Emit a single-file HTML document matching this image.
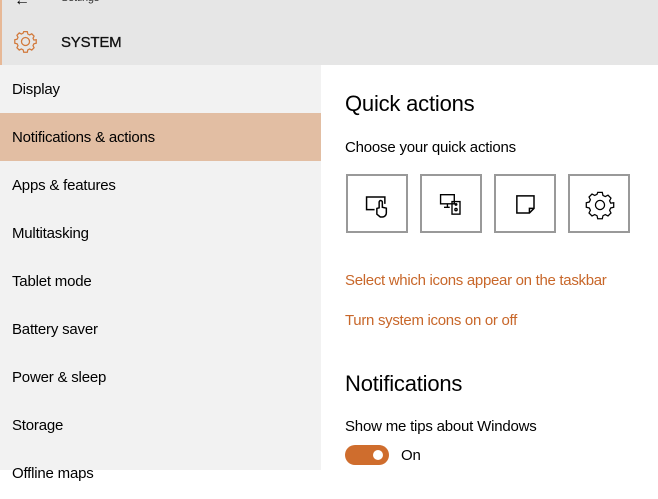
<!DOCTYPE html><html><head><style>
body{margin:0;width:658px;height:470px;overflow:hidden;font-family:"Liberation Sans",sans-serif;background:#fff;position:relative}
.hdr{position:absolute;left:0;top:0;width:658px;height:65px;background:#e6e6e6}
.side{position:absolute;left:0;top:65px;width:321px;height:405px;background:#f2f2f2}
.it{position:absolute;left:0;width:321px;height:48px;line-height:50px;font-size:15px;color:#000;padding-left:12px;box-sizing:border-box;letter-spacing:-.2px}
.sel{background:#e2bea3}
.box{position:absolute;top:174px;width:62px;height:59px;border:2px solid #999;box-sizing:border-box}
.box svg{position:absolute;left:14px;top:13px}
.t{position:absolute;color:#000;letter-spacing:-.2px}
.lnk{position:absolute;color:#c8672a;font-size:15px;letter-spacing:-.3px}
</style></head><body>
<div class="hdr"></div>
<div style="position:absolute;left:0;top:0;width:2px;height:470px;background:#e7b896"></div>
<div class="t" style="left:14px;top:-8px;font-size:16px">&#8592;</div>
<div class="t" style="left:61px;top:-8px;font-size:11px;color:#333">Settings</div>
<svg style="position:absolute;left:13px;top:29px" width="25" height="25" viewBox="0 0 28 28" fill="none" stroke="#d2793b" stroke-width="1.4"><path d="M12 3h4l.6 2.6 2 1 2.4-1.2 2.6 2.6-1.2 2.4 1 2L26 12v4l-2.6.6-1 2 1.2 2.4-2.6 2.6-2.4-1.2-2 1L16 26h-4l-.6-2.6-2-1L7 23.6 4.4 21l1.2-2.4-1-2L2 16v-4l2.6-.6 1-2-1.2-2.4L7 4.4l2.4 1.2 2-1z"/><circle cx="14" cy="14" r="4.5"/></svg>
<div class="t" style="left:61px;top:34px;font-size:15px;color:#111;-webkit-text-stroke:.3px #111">SYSTEM</div>
<div class="side"></div>
<div class="it" style="top:65px">Display</div>
<div class="it sel" style="top:113px">Notifications &amp; actions</div>
<div class="it" style="top:161px">Apps &amp; features</div>
<div class="it" style="top:209px">Multitasking</div>
<div class="it" style="top:257px">Tablet mode</div>
<div class="it" style="top:305px">Battery saver</div>
<div class="it" style="top:353px">Power &amp; sleep</div>
<div class="it" style="top:401px">Storage</div>
<div class="it" style="top:449px">Offline maps</div>
<div class="t" style="left:345px;top:91px;font-size:22px">Quick actions</div>
<div class="t" style="left:345px;top:139px;font-size:15px">Choose your quick actions</div>
<div class="box" style="left:346px"><svg width="32" height="32" viewBox="0 0 28 28" fill="none" stroke="#000" stroke-width="1.3"><path d="M11 18H4V7h16v6"/><path d="M13 22v-5l2-.5v-5a1.4 1.4 0 012.8 0v4.5l3.5.8V21a3.5 3.5 0 01-3.5 3.5H16z"/></svg></div>
<div class="box" style="left:420px"><svg width="32" height="32" viewBox="0 0 28 28" fill="none" stroke="#000" stroke-width="1.2"><path d="M4 5h12v8H4zM10 13v3M7 16h5"/><rect x="14" y="11" width="7" height="11"/><circle cx="17.5" cy="13.5" r=".7"/><circle cx="17.5" cy="18" r="1"/></svg></div>
<div class="box" style="left:494px"><svg width="32" height="32" viewBox="0 0 28 28" fill="none" stroke="#000" stroke-width="1.3"><path d="M6 6h15v11l-4 4H6z"/><path d="M21 17h-4v4"/></svg></div>
<div class="box" style="left:568px"><svg width="32" height="32" viewBox="0 0 28 28" fill="none" stroke="#000" stroke-width="1.1"><path d="M12 3h4l.6 2.6 2 1 2.4-1.2 2.6 2.6-1.2 2.4 1 2L26 12v4l-2.6.6-1 2 1.2 2.4-2.6 2.6-2.4-1.2-2 1L16 26h-4l-.6-2.6-2-1L7 23.6 4.4 21l1.2-2.4-1-2L2 16v-4l2.6-.6 1-2-1.2-2.4L7 4.4l2.4 1.2 2-1z"/><circle cx="14" cy="14" r="4"/></svg></div>
<div class="lnk" style="left:345px;top:272px">Select which icons appear on the taskbar</div>
<div class="lnk" style="left:345px;top:312px">Turn system icons on or off</div>
<div class="t" style="left:345px;top:371px;font-size:22px">Notifications</div>
<div class="t" style="left:345px;top:418px;font-size:15px">Show me tips about Windows</div>
<div style="position:absolute;left:345px;top:445px;width:44px;height:20px;border-radius:10px;background:#cf6d2d"></div>
<div style="position:absolute;left:373px;top:450px;width:10px;height:10px;border-radius:5px;background:#fff"></div>
<div class="t" style="left:401px;top:447px;font-size:15px">On</div>
</body></html>
